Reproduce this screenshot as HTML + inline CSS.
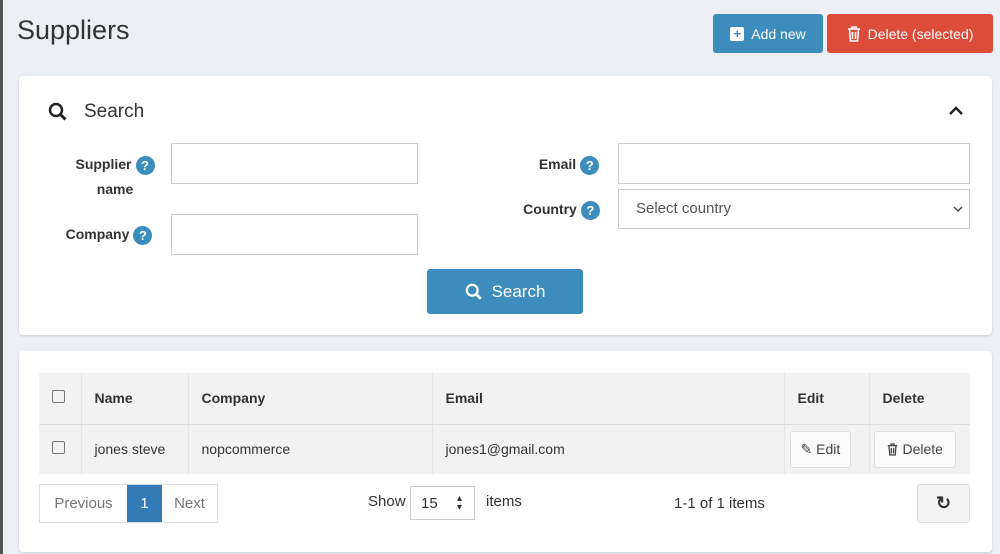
<!DOCTYPE html>
<html><head><style>
*{box-sizing:border-box;margin:0;padding:0}
body{width:1000px;height:554px;background:#ecf0f4;font-family:"Liberation Sans",sans-serif;color:#333;position:relative;overflow:hidden}
.abs{position:absolute}
.btn{position:absolute;color:#fff;font-size:14px;border-radius:3px;display:flex;align-items:center;justify-content:center;gap:7px}
.card{position:absolute;background:#fff;border-radius:4px;box-shadow:0 1px 2px rgba(0,0,0,.15)}
.inp{position:absolute;border:1px solid #ccc;background:#fff;height:41px}
.lbl{position:absolute;font-weight:bold;font-size:14px;text-align:center;line-height:25px}
.q{display:inline-block;width:19px;height:19px;border-radius:50%;background:#3c8dbc;color:#fff;font-size:13px;line-height:19px;text-align:center;vertical-align:middle;margin-left:4px}
td,th{border-right:1px solid #e4e4e4;font-size:14px;text-align:left;padding-left:13px}
th{font-weight:bold;height:51px}
td{height:50px}
.cb{display:inline-block;width:13px;height:13px;border:1px solid #777;border-radius:2px}
.sb{display:inline-flex;align-items:center;gap:5px;border:1px solid #ddd;border-radius:3px;background:#fafafa;height:37px;padding:0 10px;font-size:14px;color:#444}
</style></head><body>
<div class="abs" style="left:0;top:0;width:3px;height:554px;background:#555"></div>
<div class="abs" style="left:17px;top:15px;font-size:27px;color:#333">Suppliers</div>
<div class="btn" style="left:713px;top:14px;width:110px;height:39px;background:#3c8dbc"><span style="width:14px;height:14px;background:#fff;border-radius:2px;color:#3c8dbc;font-size:13px;line-height:14px;text-align:center;font-weight:bold">+</span>Add new</div>
<div class="btn" style="left:827px;top:14px;width:166px;height:39px;background:#dd4b39"><svg width="14" height="16" viewBox="0 0 14 16"><path d="M1 3h12M5 3V1h4v2M2.5 3l1 12h7l1-12M5.5 6v7M8.5 6v7" stroke="#fff" stroke-width="1.6" fill="none"/></svg>Delete (selected)</div>

<div class="card" style="left:19px;top:76px;width:973px;height:259px">
 <svg class="abs" style="left:29px;top:26px" width="20" height="20" viewBox="0 0 20 20"><circle cx="8" cy="8" r="6" stroke="#222" stroke-width="2.5" fill="none"/><path d="M12.5 12.5l5 5" stroke="#222" stroke-width="3"/></svg>
 <div class="abs" style="left:65px;top:25px;font-size:19px">Search</div>
 <svg class="abs" style="left:929px;top:29px" width="16" height="12" viewBox="0 0 16 12"><path d="M2 9l6-6 6 6" stroke="#222" stroke-width="2.5" fill="none"/></svg>
 <div class="lbl" style="left:40px;top:76px;width:112px">Supplier<span class="q">?</span><br>name</div>
 <div class="inp" style="left:152px;top:67px;width:247px"></div>
 <div class="lbl" style="left:40px;top:146px;width:100px">Company<span class="q">?</span></div>
 <div class="inp" style="left:152px;top:138px;width:247px"></div>
 <div class="lbl" style="left:510px;top:76px;width:80px">Email<span class="q">?</span></div>
 <div class="inp" style="left:599px;top:67px;width:352px"></div>
 <div class="lbl" style="left:495px;top:121px;width:95px">Country<span class="q">?</span></div>
 <div class="inp" style="left:599px;top:113px;width:352px;height:40px;font-size:15px;color:#555;padding:10px 17px">Select country<svg style="position:absolute;right:6px;top:15px" width="10" height="8" viewBox="0 0 10 8"><path d="M1 2l4 4 4-4" stroke="#444" stroke-width="1.5" fill="none"/></svg></div>
 <div class="btn" style="left:408px;top:193px;width:156px;height:45px;background:#3c8dbc;font-size:17px;gap:9px"><svg width="18" height="18" viewBox="0 0 20 20"><circle cx="8" cy="8" r="6" stroke="#fff" stroke-width="2.5" fill="none"/><path d="M12.5 12.5l5 5" stroke="#fff" stroke-width="3"/></svg>Search</div>
</div>

<div class="card" style="left:19px;top:351px;width:973px;height:201px">
 <table class="abs" style="left:20px;top:22px;width:931px;border-collapse:collapse;background:#f2f2f2">
  <tr style="border-bottom:1px solid #ddd"><th style="width:42px"><span class="cb"></span></th><th style="width:107px">Name</th><th style="width:244px">Company</th><th style="width:352px">Email</th><th style="width:85px">Edit</th><th style="border:none">Delete</th></tr>
  <tr><td><span class="cb"></span></td><td>jones steve</td><td>nopcommerce</td><td>jones1@gmail.com</td><td style="padding-left:5px"><span class="sb">&#9998; Edit</span></td><td style="padding-left:4px;border:none"><span class="sb" style="padding:0 12px"><svg width="11" height="15" viewBox="0 0 14 16"><path d="M1 3h12M5 3V1h4v2M2.5 3l1 12h7l1-12M5.5 6v7M8.5 6v7" stroke="#444" stroke-width="1.6" fill="none"/></svg>Delete</span></td></tr>
 </table>
 <div class="abs" style="left:20px;top:133px;width:179px;height:39px;border:1px solid #ddd;display:flex;font-size:15px;color:#777;line-height:37px">
  <span style="width:87px;text-align:center">Previous</span><span style="width:35px;background:#337ab7;color:#fff;text-align:center">1</span><span style="flex:1;text-align:center">Next</span></div>
 <div class="abs" style="left:349px;top:142px;font-size:15px">Show</div>
 <div class="abs" style="left:391px;top:135px;width:65px;height:34px;border:1px solid #ccc;font-size:15px;padding:8px 10px">15<span style="position:absolute;right:12px;top:7px;font-size:10px;line-height:9px">▴<br>▾</span></div>
 <div class="abs" style="left:467px;top:142px;font-size:15px">items</div>
 <div class="abs" style="left:655px;top:144px;font-size:15px">1-1 of 1 items</div>
 <div class="abs" style="left:898px;top:133px;width:53px;height:39px;border:1px solid #ddd;border-radius:3px;background:#f4f4f4;text-align:center;line-height:37px;font-size:18px;font-weight:bold">&#8635;</div>
</div>
</body></html>
